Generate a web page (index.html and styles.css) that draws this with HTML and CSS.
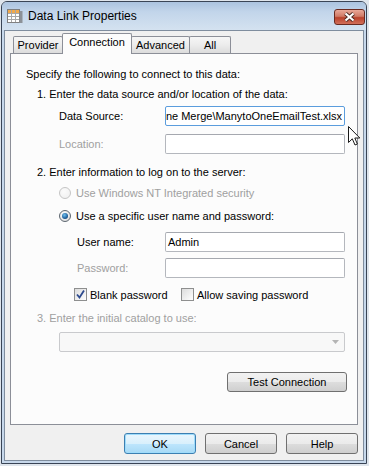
FILE: index.html
```html
<!DOCTYPE html>
<html lang="en">
<head>
    <meta charset="UTF-8">
    <title>Data Link Properties</title>
    <link rel="stylesheet" href="styles.css">
</head>
<body>
    <div class="window">
        <div class="titlebar">
            <svg class="app-icon" width="16" height="16" viewBox="0 0 16 16">
                <rect x="0.5" y="1.5" width="12" height="13" fill="#fff" stroke="#808080"/>
                <rect x="1" y="2" width="11" height="3" fill="#f2a94a"/>
                <path d="M1 5.5h11M1 8.5h11M1 11.5h11M4.5 2v12M8.5 2v12" stroke="#a8a8a8"/>
                <rect x="12.5" y="3" width="3" height="12" fill="#8c9198"/>
            </svg>
            <span class="title">Data Link Properties</span>
            <div class="close">
                <svg width="13" height="10" viewBox="0 0 13 10">
                    <path d="M2.5 1.5 L10.5 8.5 M10.5 1.5 L2.5 8.5" stroke="#4a2a24" stroke-width="4"/>
                    <path d="M2.5 1.5 L10.5 8.5 M10.5 1.5 L2.5 8.5" stroke="#fff" stroke-width="2.2"/>
                </svg>
            </div>
        </div>

        <div class="client">
            <div class="tabs">
                <div class="tab tab-provider">Provider</div>
                <div class="tab tab-connection active">Connection</div>
                <div class="tab tab-advanced">Advanced</div>
                <div class="tab tab-all">All</div>
            </div>

            <div class="panel">
                <p class="intro">Specify the following to connect to this data:</p>
                <p class="step">1. Enter the data source and/or location of the data:</p>
                <div class="row row-source">
                    <span class="label">Data Source:</span>
                    <div class="field focused"><span>One Merge\ManytoOneEmailTest.xlsx</span></div>
                </div>
                <div class="row row-location">
                    <span class="label disabled">Location:</span>
                    <div class="field"></div>
                </div>

                <p class="step step-two">2. Enter information to log on to the server:</p>
                <div class="option option-nt">
                    <span class="radio disabled"></span>
                    <span class="disabled-text">Use Windows NT Integrated security</span>
                </div>
                <div class="option option-user">
                    <span class="radio checked"></span>
                    <span>Use a specific user name and password:</span>
                </div>
                <div class="row row-user">
                    <span class="label">User name:</span>
                    <div class="field"><span>Admin</span></div>
                </div>
                <div class="row row-password">
                    <span class="label disabled">Password:</span>
                    <div class="field"></div>
                </div>
                <div class="checks">
                    <div class="check-item check-blank">
                        <span class="checkbox">
                            <svg width="11" height="11" viewBox="0 0 11 11"><path d="M2 5.5 L4.5 8.5 L9 1.5" fill="none" stroke="#2d4a8e" stroke-width="1.8"/></svg>
                        </span>
                        <span>Blank password</span>
                    </div>
                    <div class="check-item">
                        <span class="checkbox"></span>
                        <span>Allow saving password</span>
                    </div>
                </div>

                <p class="step step-three disabled-text">3. Enter the initial catalog to use:</p>
                <div class="combo">
                    <svg class="combo-arrow" width="7" height="4" viewBox="0 0 7 4"><path d="M0 0h7L3.5 4z" fill="#b4b4b4"/></svg>
                </div>

                <div class="test-row">
                    <button class="btn btn-test">Test Connection</button>
                </div>
            </div>

            <div class="buttons">
                <button class="btn btn-default">OK</button>
                <button class="btn">Cancel</button>
                <button class="btn">Help</button>
            </div>
        </div>

        <!-- mouse pointer over the dialog -->
        <svg class="cursor" width="13" height="20" viewBox="0 0 13 20">
            <path d="M0.5 0.5 L0.5 16.5 L4.3 12.8 L7 19 L9.4 18 L6.8 12 L11.8 12 Z" fill="#fff" stroke="#1a1a1a" stroke-width="1" stroke-linejoin="round"/>
        </svg>
    </div>
</body>
</html>
```

FILE: styles.css
```css
body {
    margin: 0;
    background: #dfe5ec;
    font-family: "Liberation Sans", Arial, sans-serif;
    font-size: 11px;
    color: #000;
}

.window {
    position: relative;
    width: 364px;
    height: 461px;
    margin: 1px 0 0 1px;
    border: 1px solid #3a4556;
    border-radius: 6px 6px 0 0;
    background: #c7d8eb;
    display: flex;
    flex-direction: column;
}

/* title bar */
.titlebar {
    height: 28px;
    flex: none;
    display: flex;
    align-items: flex-start;
    padding-top: 6px;
    box-sizing: border-box;
    border-radius: 5px 5px 0 0;
    background: linear-gradient(to bottom, #abc3df 0%, #c2d5ea 35%, #d4e2f0 100%);
}

.app-icon {
    margin-left: 5px;
    flex: none;
}

.title {
    margin-left: 5px;
    font-size: 12px;
    line-height: 16px;
}

.close {
    margin: 1px 1px 0 auto;
    width: 31px;
    height: 16px;
    box-sizing: border-box;
    border: 1px solid #6a2a20;
    border-radius: 3px;
    background: linear-gradient(to bottom, #e9a898 0%, #d07a66 45%, #b9412b 55%, #d2705a 100%);
    display: flex;
    align-items: center;
    justify-content: center;
}

/* dialog body */
.client {
    flex: 1;
    margin: 0 2px 2px 2px;
    border: 1px solid #7f8d9e;
    background: #f0f0f0;
    padding: 2px 5px 0 5px;
}

.tabs {
    display: flex;
    align-items: flex-end;
    height: 20px;
    padding-left: 3px;
}

.tab {
    height: 17px;
    box-sizing: border-box;
    border: 1px solid #8c8f98;
    border-bottom: none;
    border-radius: 2px 2px 0 0;
    background: linear-gradient(to bottom, #f6f6f6 0%, #ececec 50%, #dcdcdc 100%);
    text-align: center;
    line-height: 16px;
    margin-right: -1px;
}

.tab-provider { width: 50px; }
.tab-connection { width: 70px; }
.tab-advanced { width: 59px; }
.tab-all { width: 42px; }

.tab.active {
    position: relative;
    z-index: 1;
    height: 21px;
    margin-bottom: -1px;
    background: #fcfcfc;
    line-height: 17px;
}

.panel {
    height: 372px;
    box-sizing: border-box;
    border: 1px solid #8c8f98;
    background: #fcfcfc;
    padding: 14px 11px 0 15px;
}

.panel p {
    margin: 0;
    line-height: 13px;
}

.step {
    margin-left: 11px !important;
}

.intro + .step { margin-top: 7px !important; }
.step-two { margin-top: 12px !important; }
.step-three { margin-top: 11px !important; }

.disabled,
.disabled-text {
    color: #a0a0a0;
}

.row {
    display: flex;
    align-items: center;
    height: 20px;
    padding-left: 33px;
}

.row-source { margin-top: 5px; }
.row-location { margin-top: 8px; }
.row-user { margin-top: 10px; padding-left: 51px; }
.row-password { margin-top: 6px; padding-left: 51px; }

.label {
    width: 106px;
    flex: none;
}

.row-user .label,
.row-password .label {
    width: 88px;
}

.field {
    width: 180px;
    height: 20px;
    box-sizing: border-box;
    border: 1px solid #b4b7bd;
    border-top-color: #a5a8af;
    border-radius: 2px;
    background: #fff;
    display: flex;
    align-items: center;
    overflow: hidden;
    white-space: nowrap;
    padding: 0 2px;
}

.field.focused {
    border-color: #5b9ddd;
    justify-content: flex-end;
    padding-left: 0;
}

.option {
    display: flex;
    align-items: center;
    height: 13px;
    padding-left: 33px;
}

.option-nt { margin-top: 7px; }
.option-user { margin-top: 10px; }

.radio {
    position: relative;
    width: 12px;
    height: 12px;
    box-sizing: border-box;
    border-radius: 50%;
    border: 1px solid #5d6670;
    background: radial-gradient(circle at 40% 35%, #ffffff 0%, #e8e8e8 60%, #cfcfcf 100%);
    margin-right: 5px;
    flex: none;
}

.radio.disabled {
    border-color: #c5c5c5;
    background: radial-gradient(circle at 40% 35%, #fbfbfb 0%, #eeeeee 100%);
}

.radio.checked::after {
    content: "";
    position: absolute;
    left: 2px;
    top: 2px;
    width: 6px;
    height: 6px;
    border-radius: 50%;
    background: radial-gradient(circle at 40% 35%, #6fc0f0 0%, #1f5f9a 60%, #0e2f57 100%);
}

.checks {
    display: flex;
    align-items: center;
    height: 13px;
    margin-top: 10px;
    padding-left: 48px;
}

.check-item {
    display: flex;
    align-items: center;
}

.check-blank {
    width: 107px;
}

.checkbox {
    width: 13px;
    height: 13px;
    box-sizing: border-box;
    border: 1px solid #8e8f8f;
    background: linear-gradient(135deg, #dcdcdc 0%, #f4f4f4 70%, #ffffff 100%);
    margin-right: 3px;
    display: flex;
    align-items: center;
    justify-content: center;
    flex: none;
}

.combo {
    position: relative;
    margin: 7px 0 0 33px;
    width: 286px;
    height: 20px;
    box-sizing: border-box;
    border: 1px solid #c9cacd;
    border-radius: 2px;
    background: #f8f8f8;
    display: flex;
    align-items: center;
    justify-content: flex-end;
    padding-right: 5px;
}

.test-row {
    display: flex;
    justify-content: flex-end;
    margin-top: 20px;
}

.btn {
    height: 21px;
    width: 72px;
    padding: 0;
    box-sizing: border-box;
    border: 1px solid #707070;
    border-radius: 3px;
    background: linear-gradient(to bottom, #f2f2f2 0%, #ebebeb 50%, #dddddd 51%, #cfcfcf 100%);
    font-family: "Liberation Sans", Arial, sans-serif;
    font-size: 11px;
    color: #000;
}

.btn-test {
    width: 120px;
    height: 20px;
    margin-right: -1px;
}

.btn-default {
    border-color: #3c7fb1;
    box-shadow: inset 0 0 0 1px #9fdcfb;
    background: linear-gradient(to bottom, #eaf6fd 0%, #d9f0fc 50%, #bee6fd 51%, #a7d9f5 100%);
}

.buttons {
    display: flex;
    justify-content: flex-end;
    gap: 9px;
    margin-top: 8px;
}

.cursor {
    position: absolute;
    left: 346px;
    top: 124px;
}
```
